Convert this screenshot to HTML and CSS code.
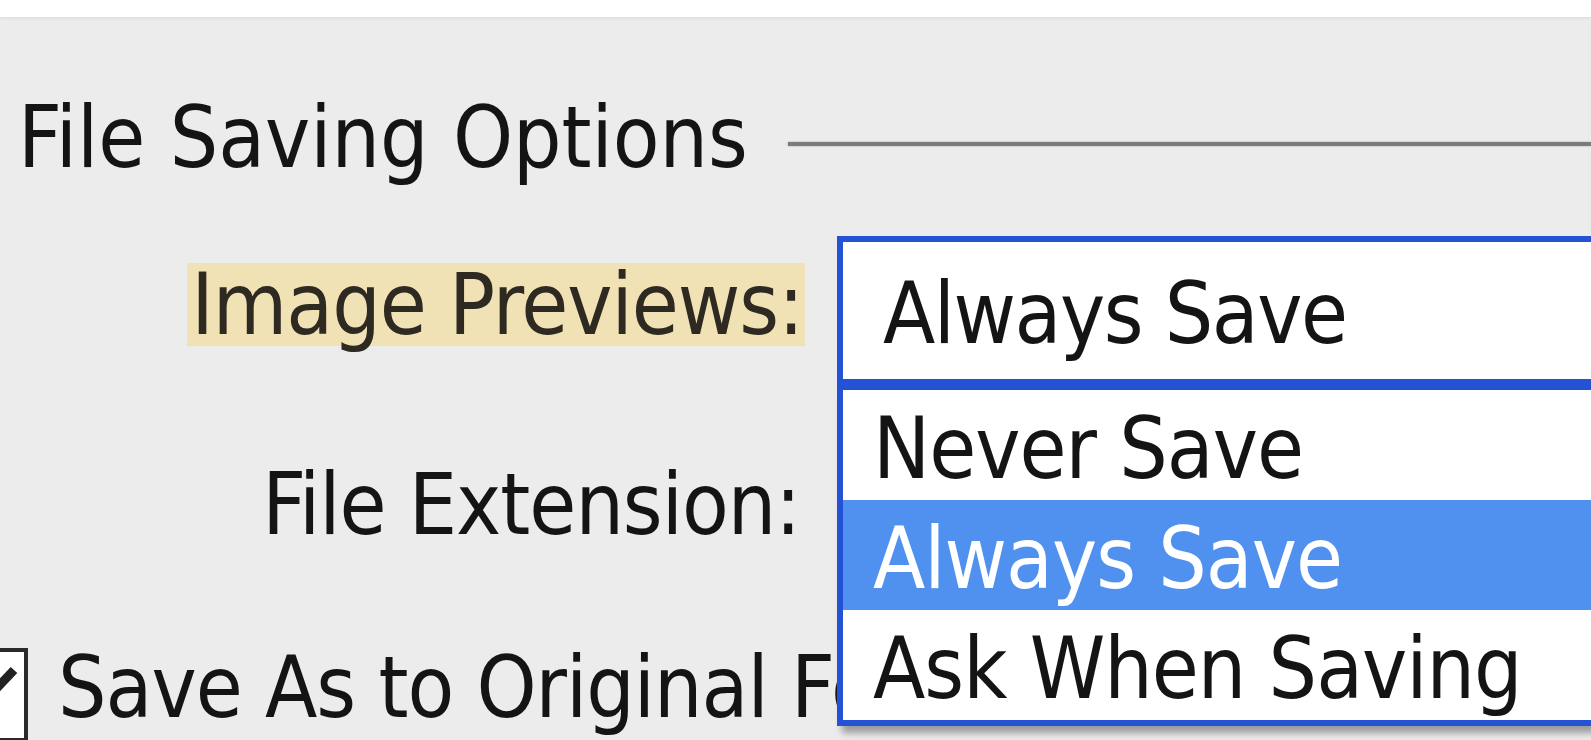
FILE: index.html
```html
<!DOCTYPE html>
<html lang="en">
<head>
  <meta charset="UTF-8">
  <title>Preferences - File Handling</title>
  <link rel="stylesheet" href="styles.css">
</head>
<body>

<div class="top-strip"></div>

<div class="panel">
  <div class="group-title">
    <span class="group-name">File Saving Options</span>
    <span class="group-rule"></span>
  </div>

  <div class="field-row row-previews">
    <div class="field-label">
      <span class="label-text is-hinted">Image Previews:</span>
    </div>
    <div class="combo">
      <div class="combo-box">Always Save</div>
      <ul class="combo-menu">
        <li class="combo-item">Never Save</li>
        <li class="combo-item is-active">Always Save</li>
        <li class="combo-item">Ask When Saving</li>
      </ul>
    </div>
  </div>

  <div class="field-row row-extension">
    <div class="field-label">
      <span class="label-text">File Extension:</span>
    </div>
  </div>

  <div class="check-row">
    <span class="check-box">
      <svg viewBox="0 0 80 80" width="80" height="80">
        <path d="M12 40 L30 58 L68 18" fill="none" stroke="#222" stroke-width="9"/>
      </svg>
    </span>
    <!-- the open menu hides the end of this label -->
    <span class="check-label">Save As to Original Folder</span>
  </div>
</div>

</body>
</html>
```

FILE: styles.css
```css
html, body {
  overflow: hidden;
}

body {
  margin: 0;
  width: 1591px;
  height: 740px;
  background-color: #ececec;
  font-family: "DejaVu Sans Condensed", "DejaVu Sans", sans-serif;
  font-size: 85px;
  color: #141414;
}

.top-strip {
  height: 17px;
  background: #fff;
  box-shadow: 0 2px 3px rgba(0, 0, 0, 0.05);
}

.panel {
  padding-top: 71px;
}

.group-title {
  display: flex;
  height: 100px;
  line-height: 100px;
  padding-left: 18px;
}

.group-name {
  white-space: nowrap;
}

.group-rule {
  flex: 1;
  height: 4px;
  margin: 54px 0 0 40px;
  background: #7b7b7b;
  box-shadow: 0 0 2px rgba(0, 0, 0, 0.3);
}

.field-row {
  display: flex;
}

.field-label {
  width: 805px;
  display: flex;
  justify-content: flex-end;
  flex-shrink: 0;
}

.label-text {
  display: inline-block;
  height: 100px;
  line-height: 100px;
  white-space: nowrap;
  letter-spacing: -1px;
  padding-right: 5px;
}

.row-previews {
  margin-top: 48px;
}

.row-previews .field-label {
  padding-top: 27px;
}

.label-text.is-hinted {
  height: 83px;
  line-height: 83px;
  padding: 0 2px 0 4px;
  background: #f1e2b6;
  color: #2e2a22;
}

.combo {
  position: relative;
  margin-left: 32px;
  width: 900px;
  flex-shrink: 0;
}

.combo-box {
  height: 134px;
  padding: 3px 0 0 40px;
  line-height: 137px;
  background: #fff;
  border-top: 6px solid #2352d4;
  border-left: 6px solid #2352d4;
  border-bottom: 11px solid #2352d4;
  white-space: nowrap;
  letter-spacing: -1.5px;
}

.combo-menu {
  position: absolute;
  top: 100%;
  left: 0;
  right: 0;
  margin: 0;
  padding: 0;
  list-style: none;
  background: #fff;
  border-left: 6px solid #2352d4;
  border-bottom: 6px solid #2352d4;
  box-shadow: 5px 7px 7px rgba(0, 0, 0, 0.35);
  z-index: 2;
}

.combo-item {
  height: 106px;
  padding: 4px 0 0 30px;
  line-height: 109px;
  white-space: nowrap;
  letter-spacing: -1px;
}

.combo-item.is-active {
  background: #5091ef;
  color: #fff;
}

.row-extension {
  margin-top: 65px;
}

.check-row {
  display: flex;
  align-items: flex-start;
  margin-top: 83px;
  margin-left: -58px;
  height: 100px;
  line-height: 100px;
  white-space: nowrap;
  letter-spacing: -1px;
}

.check-box {
  display: block;
  width: 78px;
  height: 86px;
  margin-top: 10px;
  border: 4px solid #2a2a2a;
  background: #fff;
  flex-shrink: 0;
}

.check-box svg {
  display: block;
}

.check-label {
  display: block;
  width: 780px;
  overflow: hidden;
  margin-left: 30px;
}
```
